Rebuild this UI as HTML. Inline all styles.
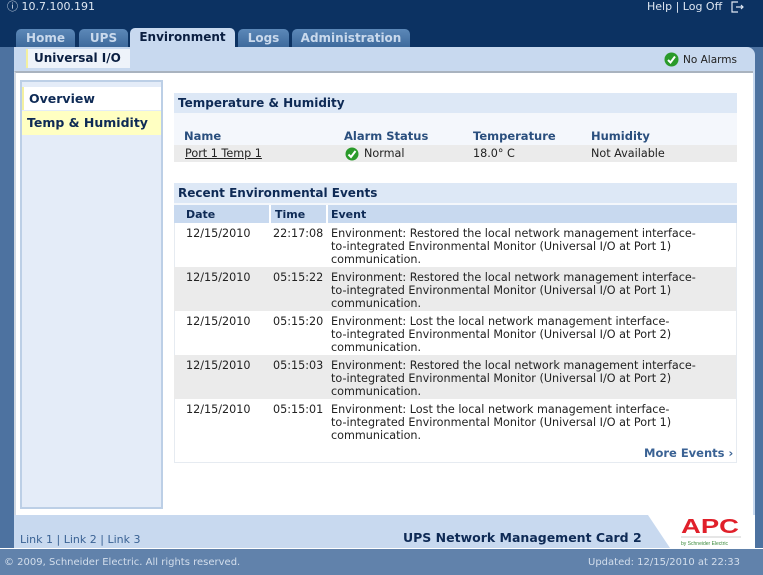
<!DOCTYPE html>
<html><head><style>
*{margin:0;padding:0;box-sizing:border-box}
body{width:763px;height:575px;overflow:hidden;background:#4d72a0;font-family:"DejaVu Sans",Verdana,sans-serif;font-size:11px;color:#222;position:relative}
.a{position:absolute}
.top{left:0;top:0;width:763px;height:47px;background:#0c3262}
.tab{position:absolute;top:29px;height:18px;background:linear-gradient(#5c88b8,#3e6a9c);color:#c9d9ec;font-weight:bold;font-size:12px;text-align:center;line-height:18px;border-radius:5px 5px 0 0}
.tab.on{background:#c8d9ef;color:#0a1e40;top:28px;height:19px}
.panel{left:14px;top:47px;width:741px;height:501px;background:#c8d9ef;border-radius:0 8px 0 0}
.white{left:14px;top:71px;width:739px;height:444px;background:#fff;border-top:2px solid #a9b3bf;border-left:2px solid #d0d8e2}
.hdr{background:#dde8f6;color:#0e2a55;font-weight:bold;font-size:12px;padding-left:4px;line-height:20px;border-bottom:2px solid #f4f7fb}
.ev{left:174px;width:562px;height:44px;font-size:11.2px;line-height:13px;color:#222}
.ev span{position:absolute;top:4px}
</style></head><body>
<div class="a top"></div>
<div class="a" style="left:7px;top:0;color:#dfe7f2;font-size:11px;line-height:13px">ⓘ 10.7.100.191</div>
<div class="a" style="left:647px;top:0;color:#dfe7f2;font-size:11px;line-height:13px">Help | Log Off</div>
<svg class="a" style="left:731px;top:1px" width="14" height="12"><path d="M7 1H1V11H7M5 6H12M10 4L12 6L10 8" stroke="#dfe7f2" fill="none" stroke-width="1.2"/></svg>
<div class="a panel"></div>
<div class="tab" style="left:16px;width:59px">Home</div>
<div class="tab" style="left:79px;width:49px">UPS</div>
<div class="tab on" style="left:130px;width:105px">Environment</div>
<div class="tab" style="left:238px;width:51px">Logs</div>
<div class="tab" style="left:292px;width:118px">Administration</div>
<div class="a" style="left:26px;top:49px;width:104px;height:19px;background:#eef3fa;border-left:2px solid #f3f0a0;color:#0a1e40;font-weight:bold;font-size:12px;line-height:19px;padding-left:6px">Universal I/O</div>
<svg class="a" style="left:664px;top:52px" width="15" height="15"><circle cx="7.5" cy="7.5" r="7" fill="#2a9a2a"/><path d="M4 8L6.5 10.5L11 4.5" stroke="#fff" stroke-width="2" fill="none"/></svg>
<div class="a" style="left:683px;top:54px;font-size:10.5px;color:#222">No Alarms</div>
<div class="a white"></div>
<div class="a" style="left:20px;top:80px;width:143px;height:429px;background:#e4ecf8;border:2px solid #bccfe6"></div>
<div class="a" style="left:22px;top:87px;width:139px;height:23px;background:#fff;color:#0e2a55;font-weight:bold;font-size:12.5px;line-height:23px;padding-left:5px;border-left:2px solid #f3f0a0">Overview</div>
<div class="a" style="left:22px;top:111px;width:139px;height:24px;background:#ffffc2;color:#0e2a55;font-weight:bold;font-size:12.5px;line-height:24px;padding-left:5px">Temp &amp; Humidity</div>

<div class="a hdr" style="left:174px;top:93px;width:563px">Temperature &amp; Humidity</div>
<div class="a" style="left:174px;top:115px;width:563px;height:30px;background:#f4f7fc"></div>
<div class="a" style="left:174px;top:145px;width:563px;height:17px;background:#ebebeb"></div>
<div class="a" style="top:129px;left:184px;color:#2a4f7e;font-weight:bold;font-size:11.5px">Name</div>
<div class="a" style="top:129px;left:344px;color:#2a4f7e;font-weight:bold;font-size:11.5px">Alarm Status</div>
<div class="a" style="top:129px;left:473px;color:#2a4f7e;font-weight:bold;font-size:11.5px">Temperature</div>
<div class="a" style="top:129px;left:591px;color:#2a4f7e;font-weight:bold;font-size:11.5px">Humidity</div>
<div class="a" style="top:147px;left:185px;text-decoration:underline;font-size:11.2px">Port 1 Temp 1</div>
<svg class="a" style="left:345px;top:147px" width="14" height="14"><circle cx="7" cy="7" r="6.5" fill="#2a9a2a"/><path d="M3.5 7.5L6 10L10.5 4" stroke="#fff" stroke-width="2" fill="none"/></svg>
<div class="a" style="top:147px;left:364px;font-size:11.2px">Normal</div>
<div class="a" style="top:147px;left:473px;font-size:11.2px">18.0° C</div>
<div class="a" style="top:147px;left:591px;font-size:11.2px">Not Available</div>

<div class="a" style="left:174px;top:183px;width:563px;height:280px;border:1px solid #e6ebf1;border-top:none"></div>
<div class="a hdr" style="left:174px;top:183px;width:563px">Recent Environmental Events</div>
<div class="a" style="left:174px;top:205px;width:563px;height:18px;background:#c8d9ef"></div>
<div class="a" style="left:269px;top:205px;width:2px;height:106px;background:#fff"></div>
<div class="a" style="left:326px;top:205px;width:2px;height:106px;background:#fff"></div>
<div class="a" style="left:186px;top:208px;color:#0e2a55;font-weight:bold">Date</div>
<div class="a" style="left:275px;top:208px;color:#0e2a55;font-weight:bold">Time</div>
<div class="a" style="left:331px;top:208px;color:#0e2a55;font-weight:bold">Event</div>

<div class="a ev" style="top:223px"><span style="left:12px">12/15/2010</span><span style="left:99px">22:17:08</span><span style="left:157px">Environment: Restored the local network management interface-<br>to-integrated Environmental Monitor (Universal I/O at Port 1)<br>communication.</span></div>
<div class="a ev" style="top:267px;background:#ebebeb"><span style="left:12px">12/15/2010</span><span style="left:99px">05:15:22</span><span style="left:157px">Environment: Restored the local network management interface-<br>to-integrated Environmental Monitor (Universal I/O at Port 1)<br>communication.</span></div>
<div class="a ev" style="top:311px"><span style="left:12px">12/15/2010</span><span style="left:99px">05:15:20</span><span style="left:157px">Environment: Lost the local network management interface-<br>to-integrated Environmental Monitor (Universal I/O at Port 2)<br>communication.</span></div>
<div class="a ev" style="top:355px;background:#ebebeb"><span style="left:12px">12/15/2010</span><span style="left:99px">05:15:03</span><span style="left:157px">Environment: Restored the local network management interface-<br>to-integrated Environmental Monitor (Universal I/O at Port 2)<br>communication.</span></div>
<div class="a ev" style="top:399px"><span style="left:12px">12/15/2010</span><span style="left:99px">05:15:01</span><span style="left:157px">Environment: Lost the local network management interface-<br>to-integrated Environmental Monitor (Universal I/O at Port 1)<br>communication.</span></div>
<div class="a" style="left:644px;top:446px;color:#3a6294;font-weight:bold;font-size:11.5px">More Events ›</div>

<div class="a" style="left:20px;top:533px;color:#3a6294;font-size:11px">Link 1 | Link 2 | Link 3</div>
<div class="a" style="left:403px;top:530px;color:#0e2a55;font-weight:bold;font-size:12.5px">UPS Network Management Card 2</div>
<svg class="a" style="left:648px;top:515px" width="107" height="33"><polygon points="0,0 107,0 107,33 22,33" fill="#fff"/><text x="33" y="18" font-family="Liberation Sans,sans-serif" font-weight="bold" font-size="20" fill="#e0202a" textLength="58" lengthAdjust="spacingAndGlyphs">APC</text><line x1="33" y1="22" x2="93" y2="22" stroke="#ccc"/><text x="33" y="30" font-family="Liberation Sans,sans-serif" font-size="5" fill="#3a8a3a">by Schneider Electric</text></svg>
<div class="a" style="left:0;top:548px;width:763px;height:27px;background:#6182ab;border-top:1px solid #fff"></div>
<div class="a" style="left:4px;top:557px;color:#d3deec;font-size:10px">© 2009, Schneider Electric. All rights reserved.</div>
<div class="a" style="left:588px;top:557px;color:#d3deec;font-size:10px">Updated: 12/15/2010 at 22:33</div>
</body></html>
